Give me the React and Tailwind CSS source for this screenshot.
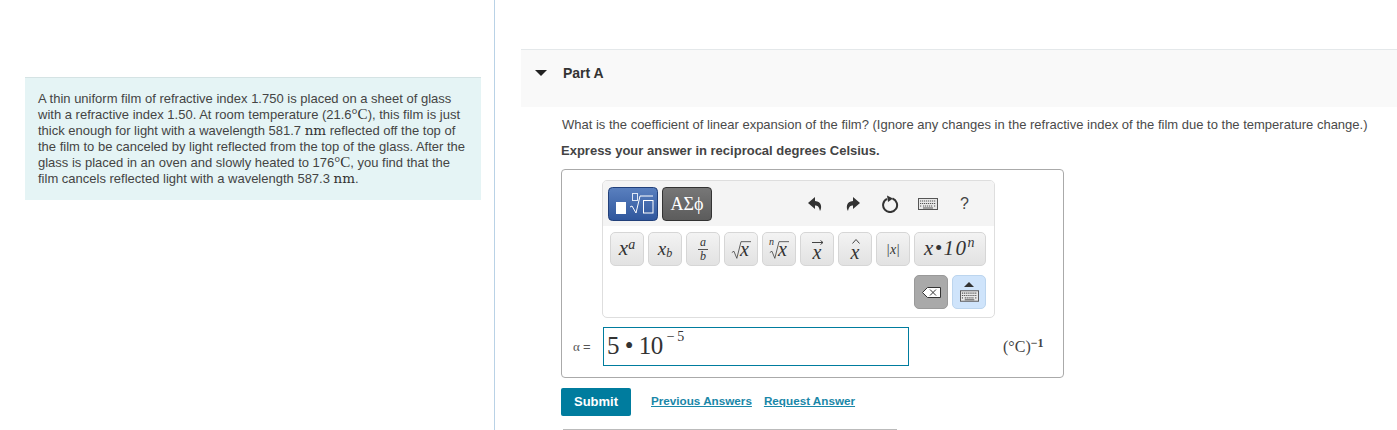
import React from 'react';

const serif = "font-['Liberation_Serif',serif]";
const nm = "font-['DejaVu_Serif',serif] text-[13.5px] leading-[14px] text-[#333]";
const deg = "font-['Liberation_Serif',serif] text-[15px] leading-[14px] text-[#333]";

const Keyboard = ({ className = '' }) => (
    <svg viewBox="0 0 20 12" className={className}>
        <rect x="0.5" y="0.5" width="19" height="11" fill="#e8e8e8" stroke="#555" />
        <path d="M2 3h16M2 5.5h16M2 8h2M5 8h10M16 8h2" stroke="#555" strokeWidth="1.2" strokeDasharray="1.2 0.8" fill="none" />
        <path d="M5 10h10" stroke="#555" strokeWidth="1" />
    </svg>
);

const Radical = ({ className = '' }) => (
    <svg viewBox="0 0 24 24" className={className} fill="none" stroke="#444">
        <path d="M1 15l2.5-1.5L7 22 12 2h12" strokeWidth="1" />
    </svg>
);

const MathKey = ({ children, wide }) => (
    <div className={`${wide ? 'w-[72px]' : 'w-[34px]'} h-[34px] shrink-0 relative flex items-center justify-center rounded-[5px] border border-[#d6d6d6] bg-gradient-to-b from-[#f3f3f3] to-[#e2e2e2] text-[#333] ${serif}`}>
        {children}
    </div>
);

const App = () => {
    return (
        <div className="w-[1397px] h-[430px] overflow-hidden flex bg-white text-[#333] font-['Liberation_Sans',sans-serif]">
            {/* Left column */}
            <div className="w-[495px] shrink-0 border-r border-[#b9d2e6] pt-[77px] pl-[25px] pr-[13px]">
                <div className="h-[123px] bg-[#e5f4f5] border-t border-[#d5e3e4] pl-[13px] pt-[13px] text-[13px] leading-[16px] text-[#444] whitespace-nowrap">
                    <p>A thin uniform film of refractive index 1.750 is placed on a sheet of glass</p>
                    <p>with a refractive index 1.50. At room temperature (21.6<span className={deg}>°C</span>), this film is just</p>
                    <p>thick enough for light with a wavelength 581.7 <span className={nm}>nm</span> reflected off the top of</p>
                    <p>the film to be canceled by light reflected from the top of the glass. After the</p>
                    <p>glass is placed in an oven and slowly heated to 176<span className={deg}>°C</span>, you find that the</p>
                    <p>film cancels reflected light with a wavelength 587.3 <span className={nm}>nm</span>.</p>
                </div>
            </div>

            {/* Right column */}
            <div className="flex-1 pl-[26px] pt-[49px]">
                <div className="h-[58px] bg-[#f9f9f9] border-t border-[#e4e8ea] flex items-start pt-[15px] pl-[14px]">
                    <div className="mt-[5px] w-0 h-0 border-l-[6px] border-r-[6px] border-t-[6px] border-l-transparent border-r-transparent border-t-[#222]" />
                    <span className="ml-[16px] text-[14px] leading-[16px] font-bold text-[#333]">Part A</span>
                </div>

                <div className="pl-[40px]">
                    <p className="mt-[10px] ml-px text-[13px] leading-[16px] text-[#4a4a4a] whitespace-nowrap">What is the coefficient of linear expansion of the film? (Ignore any changes in the refractive index of the film due to the temperature change.)</p>
                    <p className="mt-[10px] text-[13px] leading-[16px] font-bold text-[#444]">Express your answer in reciprocal degrees Celsius.</p>

                    {/* Answer box */}
                    <div className="mt-[10px] w-[503px] h-[209px] border border-[#aaa] rounded-[4px] pt-[10px] pl-[40px]">
                        <div className="w-[393px] h-[138px] border border-[#dedede] rounded-[5px] overflow-hidden">
                            <div className="h-[45px] bg-[#f4f4f4] flex items-start pt-[6px] pl-[5px]">
                                <svg viewBox="0 0 50 34" className="w-[50px] h-[34px]">
                                    <defs>
                                        <linearGradient id="tabBlue" x1="0" y1="0" x2="0" y2="1">
                                            <stop offset="0" stopColor="#5a80bf" />
                                            <stop offset="1" stopColor="#2f569c" />
                                        </linearGradient>
                                    </defs>
                                    <rect x="0.5" y="0.5" width="49" height="33" rx="4" fill="url(#tabBlue)" stroke="#22407a" />
                                    <rect x="8" y="15" width="10" height="12" fill="#fff" />
                                    <rect x="24.500" y="6.500" width="5" height="7" fill="none" stroke="#dfe8f5" />
                                    <path d="M22 20l2-1 4 7 4-17h13" fill="none" stroke="#fff" />
                                    <rect x="35.500" y="13.500" width="9.500" height="12.500" fill="none" stroke="#fff" />
                                </svg>
                                <div className={`ml-[4px] w-[50px] h-[34px] rounded-[4px] border border-[#333] bg-gradient-to-b from-[#777] to-[#5c5c5c] flex items-center justify-center text-white text-[18px] ${serif}`}>ΑΣϕ</div>

                                <div className="ml-[96px] mt-[8px] flex items-center text-[#333]">
                                    <svg viewBox="0 0 14 14" className="w-[14px] h-[14px]" fill="#333"><path d="M7 0L0 6l7 6V8.500c2.500 0 4 1 5 5.500 2-3 2-9.500-5-10z" /></svg>
                                    <svg viewBox="0 0 14 14" className="ml-[24px] w-[14px] h-[14px]" fill="#333"><path d="M7 0l7 6-7 6V8.500c-2.500 0-4 1-5 5.500C0 11 0 4.500 7 4z" /></svg>
                                    <svg viewBox="0 0 18 18" className="ml-[21px] w-[18px] h-[18px]" fill="none" stroke="#333" strokeWidth="2"><path d="M11.500 3.500a7 7 0 1 1-5.500.300" /><path d="M6 0.500l6 3-5 3.500z" fill="#333" stroke="none" /></svg>
                                    <Keyboard className="ml-[19px] w-[20px] h-[12px]" />
                                    <span className="ml-[22px] text-[16px] leading-[18px] text-[#444]">?</span>
                                </div>
                            </div>

                            <div className="flex gap-[4px] pl-[7px] pt-[6px]">
                                <MathKey><span className="italic text-[21px]">x</span><span className="italic text-[14px] -mt-[10px]">a</span></MathKey>
                                <MathKey><span className="italic text-[19px]">x</span><span className="italic text-[12px] mt-[7px]">b</span></MathKey>
                                <MathKey>
                                    <div className="flex flex-col items-center italic text-[12px] leading-[11px]">
                                        <span>a</span>
                                        <span className="w-[10px] h-px bg-[#555] my-[1px]" />
                                        <span>b</span>
                                    </div>
                                </MathKey>
                                <MathKey>
                                    <Radical className="absolute left-[4px] top-[7px] w-[24px] h-[20px]" />
                                    <span className="italic text-[20px] ml-[7px]">x</span>
                                </MathKey>
                                <MathKey>
                                    <Radical className="absolute left-[4px] top-[7px] w-[24px] h-[20px]" />
                                    <span className="absolute left-[6px] top-[4px] italic text-[10px] leading-[10px]">n</span>
                                    <span className="italic text-[20px] ml-[7px]">x</span>
                                </MathKey>
                                <MathKey>
                                    <svg viewBox="0 0 12 5" className="absolute left-[11px] top-[7px] w-[12px] h-[5px]" fill="none" stroke="#444"><path d="M0 2.500h11M8.500 0.500l2.500 2-2.500 2" /></svg>
                                    <span className="italic text-[20px] mt-[5px]">x</span>
                                </MathKey>
                                <MathKey>
                                    <svg viewBox="0 0 8 5" className="absolute left-[13px] top-[6px] w-[8px] h-[5px]" fill="none" stroke="#444"><path d="M0.500 4.500L4 0.500l3.500 4" /></svg>
                                    <span className="italic text-[20px] mt-[5px]">x</span>
                                </MathKey>
                                <MathKey><span className="italic text-[14px]">|x|</span></MathKey>
                                <MathKey wide><span className="italic text-[21px] tracking-[1.5px] whitespace-nowrap">x•10<sup className="text-[14px] -top-[8px]">n</sup></span></MathKey>
                            </div>

                            <div className="flex justify-end gap-[4px] pr-[8px] pt-[9px]">
                                <div className="w-[34px] h-[34px] rounded-[5px] border border-[#999] bg-[#a9a9a9] flex items-center justify-center">
                                    <svg viewBox="0 0 19 11" className="w-[19px] h-[11px]" fill="#fff" stroke="#333"><path d="M18.500 0.500H5.500L0.500 5.500l5 5h13z" /><path d="M8 2.500l6 6M14 2.500l-6 6" fill="none" /></svg>
                                </div>
                                <div className="w-[34px] h-[34px] rounded-[5px] border border-[#bcd5ee] bg-[#cfe4fb] flex flex-col items-center justify-center gap-[3px]">
                                    <div className="w-0 h-0 border-l-[5px] border-r-[5px] border-b-[5px] border-l-transparent border-r-transparent border-b-[#333]" />
                                    <Keyboard className="w-[19px] h-[12px]" />
                                </div>
                            </div>
                        </div>

                        {/* Answer row */}
                        <div className="mt-[9px] -ml-[29px] flex items-center h-[39px]">
                            <span className={`text-[#555] text-[13px] w-[30px] ${serif}`}>α <span className="font-['Liberation_Sans',sans-serif]">=</span></span>
                            <div className={`w-[306px] h-[39px] border border-[#007c9e] pl-[3px] flex items-start text-[#333] text-[25px] leading-[36px] ${serif}`}>
                                <span className="tracking-[-0.5px]">5 • 10</span><span className="text-[14px] leading-[14px] mt-[2px] ml-[4px] tracking-[-0.5px]">− 5</span>
                            </div>
                            <span className={`ml-[94px] text-[16px] text-[#444] whitespace-nowrap ${serif}`}>(°C)<sup className="text-[12px] font-bold -top-[5px]">−1</sup></span>
                        </div>
                    </div>

                    {/* Actions */}
                    <div className="mt-[10px] flex items-center">
                        <div className="w-[70px] h-[28px] rounded-[2px] bg-[#007c9e] text-white text-[13px] font-bold flex items-center justify-center">Submit</div>
                        <a className="ml-[20px] text-[11.7px] font-bold text-[#1a87a8] underline -mt-[3px]">Previous Answers</a>
                        <a className="ml-[12px] text-[11.7px] font-bold text-[#1a87a8] underline -mt-[3px]">Request Answer</a>
                    </div>
                    <div className="mt-[13px] w-[334px] ml-[2px] border-t border-[#bbb]" />
                </div>
            </div>
        </div>
    );
};

export default App;
